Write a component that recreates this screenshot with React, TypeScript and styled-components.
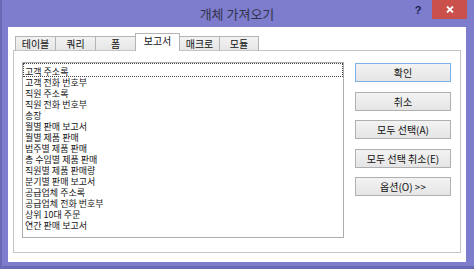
import React from 'react'
import styled, { createGlobalStyle } from 'styled-components'

const GlobalStyle = createGlobalStyle`
  html, body {
    margin: 0;
    padding: 0;
    background: #7d7ccd;
  }
  * {
    box-sizing: border-box;
  }
`

const FONT = `"Noto Sans CJK KR", "Noto Sans", sans-serif`

const Window = styled.div`
  width: 474px;
  height: 269px;
  background: #7d7ccd;
  box-shadow: inset 2px -3px 0 #6a69b6;
  display: flex;
  flex-direction: column;
  font-family: ${FONT};
`

const TitleBar = styled.div`
  height: 27px;
  display: grid;
  grid-template-columns: 1fr auto 1fr;
  flex-shrink: 0;
`

const Title = styled.div`
  grid-column: 2;
  align-self: center;
  font-size: 13px;
  line-height: 27px;
  color: #33334a;
`

const Controls = styled.div`
  grid-column: 3;
  justify-self: end;
  align-self: start;
  display: flex;
  align-items: center;
  gap: 9px;
  margin-right: 7px;
`

const Help = styled.span`
  font-family: "Liberation Sans", sans-serif;
  font-weight: 700;
  font-size: 11px;
  color: #1c2150;
  width: 10px;
  text-align: center;
`

const CloseBtn = styled.div`
  width: 35px;
  height: 19px;
  background: #c9504b;
  display: flex;
  align-items: center;
  justify-content: center;
`

const Client = styled.div`
  margin: 0 8px;
  height: 235px;
  background: #fff;
  padding: 6px 5px 9px;
  display: flex;
  flex-direction: column;
`

const TabStrip = styled.div`
  display: flex;
  align-items: flex-end;
  height: 18px;
  margin-bottom: -1px;
  padding-left: 2px;
  position: relative;
  z-index: 1;
`

const Tab = styled.div<{ $active?: boolean; $w: number }>`
  width: ${({ $w }) => $w}px;
  height: ${({ $active }) => ($active ? 18 : 15)}px;
  margin-left: -1px;
  &:first-child {
    margin-left: 0;
  }
  border: 1px solid #b4b4b4;
  border-bottom: ${({ $active }) => ($active ? 'none' : '1px solid #c5c5c5')};
  background: ${({ $active }) => ($active ? '#fff' : 'linear-gradient(#f2f2f2, #e6e6e6)')};
  position: relative;
  z-index: ${({ $active }) => ($active ? 2 : 1)};
  font-size: 10px;
  line-height: ${({ $active }) => ($active ? 13 : 13)}px;
  text-align: center;
  color: #111;
  padding-bottom: ${({ $active }) => ($active ? 3 : 0)}px;
`

const Panel = styled.div`
  flex: 1;
  border: 1px solid #c5c5c5;
  display: flex;
  gap: 11px;
  padding: 11px 9px 13px 8px;
`

const ListBox = styled.div`
  width: 322px;
  height: 176px;
  border: 1px solid #abadb3;
  background: #fff;
  align-self: flex-start;
`

const Item = styled.div<{ $focus?: boolean }>`
  font-size: 9px;
  line-height: 11px;
  height: ${({ $focus }) => ($focus ? 14 : 11)}px;
  padding: ${({ $focus }) => ($focus ? '3px 0 0 2px' : '0 0 0 2px')};
  color: #151515;
  white-space: nowrap;
  outline: ${({ $focus }) => ($focus ? '1px dotted #444' : 'none')};
  outline-offset: -1px;
`

const ButtonColumn = styled.div`
  display: flex;
  flex-direction: column;
  gap: 9.5px;
  margin-top: 1px;
`

const Button = styled.div<{ $default?: boolean }>`
  width: 96px;
  height: 19px;
  border: 1px solid ${({ $default }) => ($default ? '#7db2e8' : '#b0b0b0')};
  background: linear-gradient(#f3f3f3, #e5e5e5);
  font-size: 10px;
  line-height: 17px;
  text-align: center;
  color: #111;
`

const tabs = [
  { label: '테이블', w: 41 },
  { label: '쿼리', w: 41 },
  { label: '폼', w: 41 },
  { label: '보고서', w: 45, active: true },
  { label: '매크로', w: 41 },
  { label: '모듈', w: 40 },
]

const reports = [
  '고객 주소록',
  '고객 전화 번호부',
  '직원 주소록',
  '직원 전화 번호부',
  '송장',
  '월별 판매 보고서',
  '월별 제품 판매',
  '범주별 제품 판매',
  '총 수입별 제품 판매',
  '직원별 제품 판매량',
  '분기별 판매 보고서',
  '공급업체 주소록',
  '공급업체 전화 번호부',
  '상위 10대 주문',
  '연간 판매 보고서',
]

const buttons = ['확인', '취소', '모두 선택(A)', '모두 선택 취소(E)', '옵션(O) >>']

export default function App() {
  return (
    <>
      <GlobalStyle />
      <Window>
        <TitleBar>
          <Title>개체 가져오기</Title>
          <Controls>
            <Help>?</Help>
            <CloseBtn>
              <svg width="8" height="7" viewBox="0 0 8 7">
                <path d="M1 0.5 L7 6.5 M7 0.5 L1 6.5" stroke="#fff" strokeWidth="1.8" />
              </svg>
            </CloseBtn>
          </Controls>
        </TitleBar>
        <Client>
          <TabStrip>
            {tabs.map((t) => (
              <Tab key={t.label} $w={t.w} $active={t.active}>
                {t.label}
              </Tab>
            ))}
          </TabStrip>
          <Panel>
            <ListBox>
              {reports.map((r, i) => (
                <Item key={r} $focus={i === 0}>
                  {r}
                </Item>
              ))}
            </ListBox>
            <ButtonColumn>
              {buttons.map((b, i) => (
                <Button key={b} $default={i === 0}>
                  {b}
                </Button>
              ))}
            </ButtonColumn>
          </Panel>
        </Client>
      </Window>
    </>
  )
}
